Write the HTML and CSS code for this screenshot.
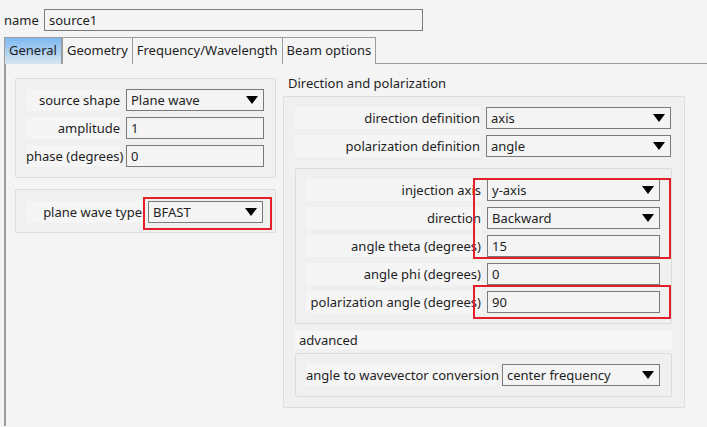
FILE: index.html
```html
<!DOCTYPE html>
<html lang="en">
<head>
    <meta charset="UTF-8">
    <title>source1</title>
    <link rel="stylesheet" href="styles.css">
</head>
<body>
    <div class="name-row">
        <span class="name-label">name</span>
        <div class="field name-field">source1</div>
    </div>

    <div class="tabs">
        <div class="tab active">General</div>
        <div class="tab">Geometry</div>
        <div class="tab">Frequency/Wavelength</div>
        <div class="tab">Beam options</div>
    </div>

    <div class="panel">
        <div class="col-left">
            <div class="box box-basic">
                <div class="row">
                    <div class="lbl">source shape</div>
                    <div class="field select">Plane wave<svg class="arrow" viewBox="0 0 12 8"><polygon points="0,0 12,0 6,8"/></svg></div>
                </div>
                <div class="row">
                    <div class="lbl">amplitude</div>
                    <div class="field">1</div>
                </div>
                <div class="row">
                    <div class="lbl">phase (degrees)</div>
                    <div class="field">0</div>
                </div>
            </div>

            <div class="box box-type">
                <div class="row">
                    <div class="lbl">plane wave type</div>
                    <div class="field select">BFAST<svg class="arrow" viewBox="0 0 12 8"><polygon points="0,0 12,0 6,8"/></svg></div>
                </div>
                <div class="mark mark-type"></div>
            </div>
        </div>

        <div class="col-right">
            <div class="title">Direction and polarization</div>
            <div class="box box-dir">
                <div class="row">
                    <div class="lbl">direction definition</div>
                    <div class="field select">axis<svg class="arrow" viewBox="0 0 12 8"><polygon points="0,0 12,0 6,8"/></svg></div>
                </div>
                <div class="row">
                    <div class="lbl">polarization definition</div>
                    <div class="field select">angle<svg class="arrow" viewBox="0 0 12 8"><polygon points="0,0 12,0 6,8"/></svg></div>
                </div>

                <div class="box box-axis">
                    <div class="row">
                        <div class="lbl">injection axis</div>
                        <div class="field select">y-axis<svg class="arrow" viewBox="0 0 12 8"><polygon points="0,0 12,0 6,8"/></svg></div>
                    </div>
                    <div class="row">
                        <div class="lbl">direction</div>
                        <div class="field select">Backward<svg class="arrow" viewBox="0 0 12 8"><polygon points="0,0 12,0 6,8"/></svg></div>
                    </div>
                    <div class="row">
                        <div class="lbl">angle theta (degrees)</div>
                        <div class="field">15</div>
                    </div>
                    <div class="row">
                        <div class="lbl">angle phi (degrees)</div>
                        <div class="field">0</div>
                    </div>
                    <div class="row">
                        <div class="lbl">polarization angle (degrees)</div>
                        <div class="field">90</div>
                    </div>
                    <div class="mark mark-axis"></div>
                    <div class="mark mark-pol"></div>
                </div>

                <div class="sub-title">advanced</div>
                <div class="box box-adv">
                    <div class="row">
                        <div class="lbl">angle to wavevector conversion</div>
                        <div class="field select">center frequency<svg class="arrow" viewBox="0 0 12 8"><polygon points="0,0 12,0 6,8"/></svg></div>
                    </div>
                </div>
            </div>
        </div>
    </div>
</body>
</html>
```

FILE: styles.css
```css
body {
    margin: 0;
    background-color: #f4f4f4;
    font-family: "Noto Sans", sans-serif;
    font-size: 13px;
    color: #1e1e1e;
    height: 427px;
    overflow: hidden;
}
.name-row {
    display: flex;
    align-items: center;
    padding: 9px 0 0 4px;
    height: 22px;
}
.name-label {
    width: 40px;
}
.field {
    box-sizing: border-box;
    height: 22px;
    border: 1px solid #7a7a7a;
    background-color: #f4f4f4;
    padding-left: 4px;
    line-height: 20px;
    white-space: nowrap;
    position: relative;
}
.name-field {
    width: 379px;
}
.select .arrow {
    position: absolute;
    right: 5px;
    top: 6px;
    width: 12px;
    height: 8px;
}
.tabs {
    display: flex;
    margin: 6px 0 0 4px;
    height: 26px;
}
.tab {
    box-sizing: border-box;
    height: 27px;
    padding: 0 4px;
    line-height: 25px;
    border: 1px solid #9c9c9c;
    border-bottom: none;
    border-left-width: 0;
    background-color: #f4f4f4;
}
.tab:first-child {
    border-left-width: 1px;
}
.tab.active {
    background: linear-gradient(#7db8f0, #d9e5f0);
    border-right-width: 2px;
}
.panel {
    display: flex;
    border-top: 1px solid #9c9c9c;
    border-left: 2px solid #9c9c9c;
    margin-left: 4px;
    padding: 14px 0 0 9px;
    height: 348px;
}
.col-left {
    width: 261px;
    display: flex;
    flex-direction: column;
    gap: 11px;
}
.col-right {
    margin-left: 7px;
    width: 402px;
}
.box {
    box-sizing: border-box;
    border: 1px solid #dcdcdc;
    border-radius: 2px;
    background-color: #f0f0f0;
    position: relative;
}
.row {
    display: flex;
    gap: 6px;
    height: 22px;
    margin-bottom: 6px;
}
.row:last-of-type {
    margin-bottom: 0;
}
.lbl {
    background-color: #f5f5f5;
    text-align: right;
    line-height: 22px;
    white-space: nowrap;
}
.box-basic {
    height: 100px;
    padding: 10px 0 0 10px;
}
.box-basic .lbl {
    width: 94px;
}
.box-basic .field {
    width: 138px;
}
.box-type {
    height: 44px;
    padding: 11px 0 0 10px;
}
.box-type .lbl {
    width: 116px;
}
.box-type .field {
    width: 115px;
}
.title {
    height: 18px;
    line-height: 18px;
    padding: 0 0 0 5px;
    margin: -4px 0 4px;
}
.box-dir {
    height: 312px;
    padding: 10px 0 0 11px;
}
.box-dir > .row .lbl {
    width: 185px;
}
.box-dir > .row .field {
    width: 185px;
}
.box-axis {
    width: 377px;
    height: 156px;
    margin-top: 11px;
    padding: 10px 0 0 10px;
}
.box-axis .lbl {
    width: 175px;
}
.box-axis .field {
    width: 173px;
}
.sub-title {
    width: 377px;
    height: 18px;
    line-height: 18px;
    margin-top: 7px;
    padding-left: 4px;
    box-sizing: border-box;
    background-color: #f6f6f6;
}
.box-adv {
    width: 377px;
    height: 44px;
    margin-top: 4px;
    padding: 10px 0 0 10px;
}
.box-adv .lbl {
    width: 190px;
}
.box-adv .field {
    width: 158px;
}
.mark {
    position: absolute;
    border: 2px solid #e3202a;
    box-sizing: border-box;
}
.mark-type {
    left: 127px;
    top: 7px;
    width: 129px;
    height: 33px;
}
.mark-axis {
    left: 177px;
    top: 9px;
    width: 198px;
    height: 81px;
}
.mark-pol {
    left: 177px;
    top: 116px;
    width: 198px;
    height: 34px;
}
```
